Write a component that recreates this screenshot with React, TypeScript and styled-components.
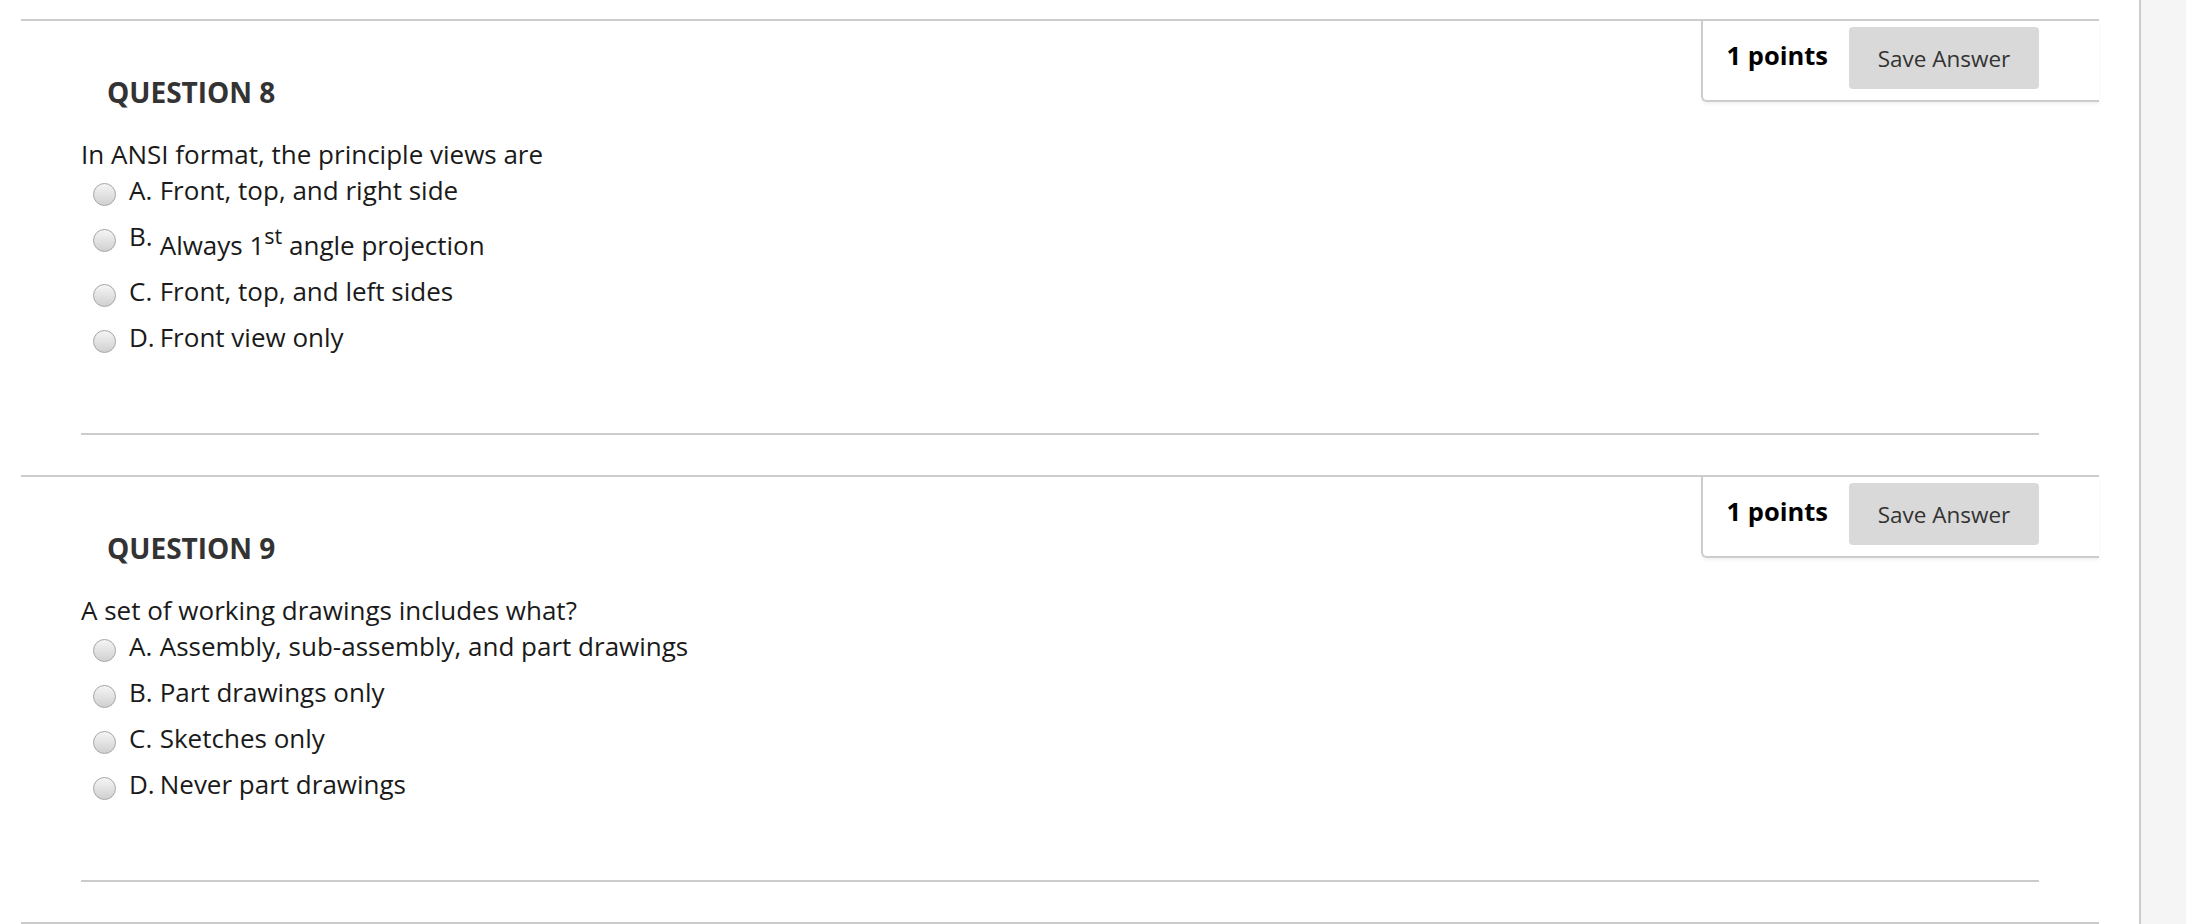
import React from "react";
import styled, { createGlobalStyle } from "styled-components";

const GlobalStyle = createGlobalStyle`
  html, body, #root {
    margin: 0;
    height: 100%;
  }
  body {
    background: #fff;
    color: #1a1a1a;
    font-family: "Open Sans", "Liberation Sans", sans-serif;
    overflow: hidden;
  }
  * {
    box-sizing: border-box;
  }
`;

const Page = styled.div`
  display: flex;
  height: 100vh;
`;

const Main = styled.main`
  flex: 1;
  padding: 19px 40px 0 21px;
`;

const ScrollTrack = styled.div`
  width: 47px;
  border-left: 2px solid #cccccc;
  background: #f5f5f5;
`;

const QuestionList = styled.div`
  border-bottom: 2px solid #cccccc;
`;

const Block = styled.section`
  border-top: 2px solid #cccccc;
  padding-bottom: 40px;
`;

const Header = styled.div`
  display: flex;
  align-items: flex-start;
  justify-content: space-between;
`;

const Title = styled.h3`
  margin: 53px 0 0 86px;
  font-size: 28px;
  line-height: 36px;
  font-weight: 700;
  color: #333333;
`;

const PointsBox = styled.div`
  display: flex;
  align-items: center;
  gap: 21px;
  height: 81px;
  padding: 6px 60px 11px 24px;
  background: #fff;
  border-left: 2px solid #cccccc;
  border-bottom: 2px solid #cccccc;
  border-bottom-left-radius: 6px;
  box-shadow: 0 2px 3px rgba(0, 0, 0, 0.06);
`;

const Points = styled.span`
  margin-bottom: 6px;
  font-size: 25.5px;
  line-height: 33px;
  font-weight: 700;
  color: #000;
`;

const SaveButton = styled.button`
  width: 190px;
  height: 62px;
  padding: 0;
  border: none;
  border-radius: 4px;
  background: #d9d9d9;
  color: #333333;
  font-family: "Open Sans", "Liberation Sans", sans-serif;
  font-size: 22.5px;
  cursor: pointer;
`;

const Body = styled.div`
  padding: 0 60px;
`;

const Prompt = styled.p`
  margin: 26px 0 0;
  font-size: 26px;
  line-height: 36px;
`;

const Options = styled.div`
  display: grid;
  grid-template-columns: 24px max-content 1fr;
  row-gap: 10px;
  align-items: start;
  margin-left: 12px;
  font-size: 26px;
  line-height: 36px;
`;

const Radio = styled.input`
  appearance: none;
  width: 23px;
  height: 23px;
  margin: 11px 0 0;
  border-radius: 50%;
  border: 1px solid #a5a5a5;
  background: linear-gradient(#f5f5f5, #d0d0d0);
`;

const Label = styled.span`
  padding: 0 5px 0 12px;
`;

const AnswerText = styled.span``;

const Sup = styled.sup`
  font-size: 21.5px;
  line-height: 36px;
  vertical-align: 11px;
`;

const Divider = styled.hr`
  margin: 78px 0 0;
  border: 0;
  border-top: 2px solid #cccccc;
`;

type Option = { label: string; text: React.ReactNode };
type Question = { number: number; points: number; prompt: string; options: Option[] };

const questions: Question[] = [
  {
    number: 8,
    points: 1,
    prompt: "In ANSI format, the principle views are",
    options: [
      { label: "A.", text: "Front, top, and right side" },
      {
        label: "B.",
        text: (
          <>
            Always 1<Sup>st</Sup> angle projection
          </>
        ),
      },
      { label: "C.", text: "Front, top, and left sides" },
      { label: "D.", text: "Front view only" },
    ],
  },
  {
    number: 9,
    points: 1,
    prompt: "A set of working drawings includes what?",
    options: [
      { label: "A.", text: "Assembly, sub-assembly, and part drawings" },
      { label: "B.", text: "Part drawings only" },
      { label: "C.", text: "Sketches only" },
      { label: "D.", text: "Never part drawings" },
    ],
  },
];

function QuestionBlock({ q }: { q: Question }) {
  return (
    <Block>
      <Header>
        <Title>QUESTION {q.number}</Title>
        <PointsBox>
          <Points>{q.points} points</Points>
          <SaveButton type="button">Save Answer</SaveButton>
        </PointsBox>
      </Header>
      <Body>
        <Prompt>{q.prompt}</Prompt>
        <Options>
          {q.options.map((o) => (
            <React.Fragment key={o.label}>
              <Radio type="radio" name={`q${q.number}`} aria-label={o.label} />
              <Label>{o.label}</Label>
              <AnswerText>{o.text}</AnswerText>
            </React.Fragment>
          ))}
        </Options>
        <Divider />
      </Body>
    </Block>
  );
}

export default function App() {
  return (
    <>
      <GlobalStyle />
      <Page>
        <Main>
          <QuestionList>
            {questions.map((q) => (
              <QuestionBlock key={q.number} q={q} />
            ))}
          </QuestionList>
        </Main>
        <ScrollTrack />
      </Page>
    </>
  );
}
